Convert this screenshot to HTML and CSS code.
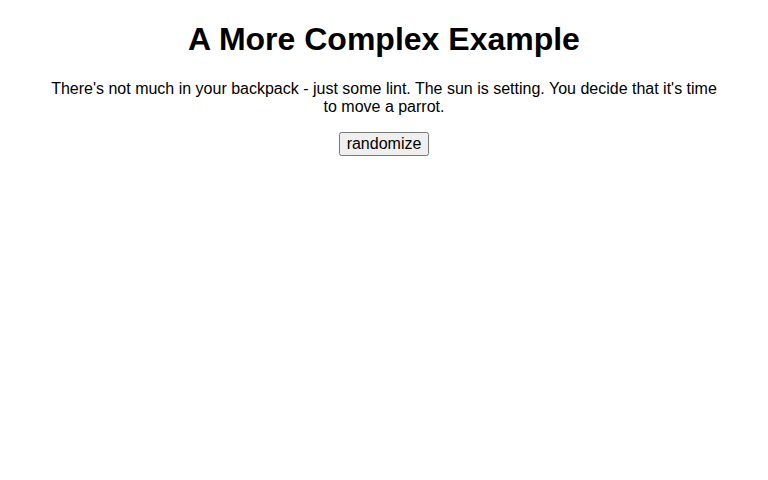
FILE: index.html
```html
<!DOCTYPE html>
<html>
<head>
<meta charset="utf-8">
<link rel="stylesheet" href="styles.css">
</head>
<body>
<div class="app">
  <h1 class="title">A More Complex Example</h1>
  <p class="story">There's not much in your backpack - just some lint. The sun is setting. You decide that it's time to move a parrot.</p>
  <button class="btn">randomize</button>
</div>
</body>
</html>
```
FILE: styles.css
```css
body {
  margin: 0;
  font-family: "Liberation Sans", Arial, sans-serif;
  color: #000;
  background: #fff;
}
.app {
  text-align: center;
  padding: 0 44px;
}
.title {
  font-size: 32px;
  margin: 21.44px 0;
}
.story {
  font-size: 16px;
  margin: 16px 0;
}
.btn {
  font-family: "Liberation Sans", Arial, sans-serif;
  font-size: 16px;
  padding: 1px 6px;
}
```
